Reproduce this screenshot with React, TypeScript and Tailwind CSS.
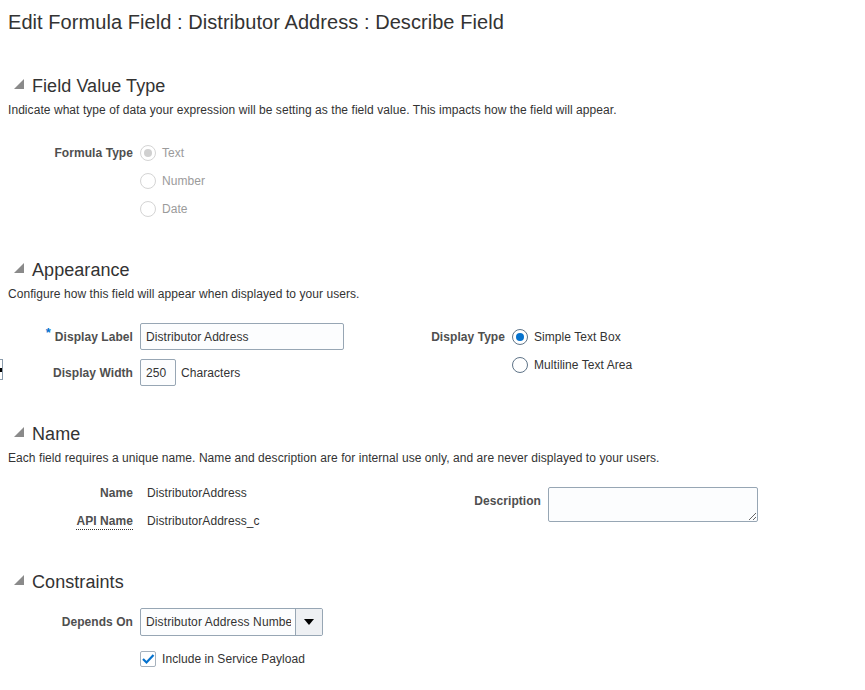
import { FC, ReactNode } from "react";

const SectionHeading: FC<{ title: string }> = ({ title }) => (
  <h2 className="flex items-center gap-2 pl-[6px] text-[18px] leading-6 text-[#333]">
    <svg className="mb-1" height="10" viewBox="0 0 10 10" width="10">
      <polygon fill="#8a8a8a" points="10,0 10,10 0,10" />
    </svg>
    {title}
  </h2>
);

const Label: FC<{ children: ReactNode; className?: string }> = ({ children, className = "w-[125px]" }) => (
  <div className={`flex h-7 shrink-0 items-center justify-end text-xs font-bold text-[#4f4f4f] ${className}`}>
    {children}
  </div>
);

const Radio: FC<{ checked?: boolean; disabled?: boolean }> = ({ checked, disabled }) => (
  <span
    className={`flex h-4 w-4 shrink-0 items-center justify-center rounded-full border bg-white ${
      disabled ? "border-[#d4d4d4]" : "border-[#5f7488]"
    }`}
  >
    {checked && <span className={`h-2 w-2 rounded-full ${disabled ? "bg-[#d0d0d0]" : "bg-[#0572ce]"}`} />}
  </span>
);

const RadioRow: FC<{ label: string; checked?: boolean; disabled?: boolean }> = ({ label, checked, disabled }) => (
  <div className="flex h-7 items-center gap-[6px]">
    <Radio checked={checked} disabled={disabled} />
    <span className={`text-xs ${disabled ? "text-[#9b9b9b]" : "text-[#333]"}`}>{label}</span>
  </div>
);

const inputClass =
  "h-[27px] rounded-[2px] border border-[#97a6b4] bg-[#fcfdfe] px-[5px] text-xs tracking-[0.06px] text-[#333] outline-none";

const App: FC = () => (
  <div className="min-h-screen bg-white px-2 pt-[10px] font-['Liberation_Sans',Arial,sans-serif] tracking-[0.06px] text-[#333]">
    <h1 className="text-[20px] leading-6 text-[#333]">Edit Formula Field : Distributor Address : Describe Field</h1>

    {/* Field Value Type */}
    <section className="mt-[40px]">
      <SectionHeading title="Field Value Type" />
      <p className="mt-1 text-xs leading-4">
        Indicate what type of data your expression will be setting as the field value. This impacts how the field will
        appear.
      </p>
      <div className="mt-[21px] flex gap-[7px]">
        <Label>Formula Type</Label>
        <div className="flex flex-col">
          <RadioRow checked disabled label="Text" />
          <RadioRow disabled label="Number" />
          <RadioRow disabled label="Date" />
        </div>
      </div>
    </section>

    {/* Appearance */}
    <section className="mt-[35px]">
      <SectionHeading title="Appearance" />
      <p className="mt-1 text-xs leading-4">Configure how this field will appear when displayed to your users.</p>
      <div className="mt-[21px] flex">
        <div className="flex w-[412px] flex-col gap-[9px]">
          <div className="flex h-[27px] items-center gap-[7px]">
            <Label className="h-[27px] w-[125px] pt-[1px]">
              <span className="mr-1 -mt-2 text-[13px] text-[#0572ce]">*</span>
              Display Label
            </Label>
            <input className={`${inputClass} w-[204px]`} readOnly value="Distributor Address" />
          </div>
          <div className="relative flex h-[27px] items-center gap-[7px]">
            {/* cut-off element at the left edge */}
            <div className="absolute top-0 left-[-25px] flex h-[21px] w-[20px] items-center justify-end border border-[#8a9bab]">
              <span className="h-[4px] w-[2px] bg-black" />
            </div>
            <Label className="h-[27px] w-[125px] pt-[1px]">Display Width</Label>
            <input className={`${inputClass} w-[36px]`} readOnly value="250" />
            <span className="ml-[-2px] pt-[1px] text-xs">Characters</span>
          </div>
        </div>
        <div className="flex gap-[7px]">
          <Label className="w-[85px]">Display Type</Label>
          <div className="flex flex-col">
            <RadioRow checked label="Simple Text Box" />
            <RadioRow label="Multiline Text Area" />
          </div>
        </div>
      </div>
    </section>

    {/* Name */}
    <section className="mt-[36px]">
      <SectionHeading title="Name" />
      <p className="mt-1 text-xs leading-4">
        Each field requires a unique name. Name and description are for internal use only, and are never displayed to
        your users.
      </p>
      <div className="mt-[13px] flex items-start">
        <div className="flex w-[412px] flex-col">
          <div className="flex gap-[7px]">
            <Label>Name</Label>
            <span className="flex h-7 items-center pl-[7px] text-xs">DistributorAddress</span>
          </div>
          <div className="flex gap-[7px]">
            <Label>
              <span className="border-b border-dotted border-[#333] leading-4">API Name</span>
            </Label>
            <span className="flex h-7 items-center pl-[7px] text-xs">DistributorAddress_c</span>
          </div>
        </div>
        <div className="mt-2 flex items-start gap-[7px]">
          <div className="w-[121px] shrink-0 pt-[6px] text-right text-xs leading-4 font-bold text-[#4f4f4f]">
            Description
          </div>
          <textarea className="h-[35px] w-[210px] rounded-[2px] border border-[#97a6b4] bg-[#fcfdfe] text-xs outline-none" />
        </div>
      </div>
    </section>

    {/* Constraints */}
    <section className="mt-[35px]">
      <SectionHeading title="Constraints" />
      <div className="mt-[14px] flex gap-[7px]">
        <Label>Depends On</Label>
        <div className="flex h-7 w-[183px] overflow-hidden rounded-[2px] border border-[#97a6b4] bg-[#fcfdfe]">
          <span className="flex flex-1 items-center pl-[5px]">
            <span className="w-[145px] overflow-hidden text-xs tracking-[0.12px] whitespace-nowrap">
              Distributor Address Number
            </span>
          </span>
          <span className="flex w-[27px] shrink-0 items-center justify-center border-l border-[#97a6b4] bg-[#eef0f3]">
            <svg height="6" viewBox="0 0 10 6" width="10">
              <polygon fill="#000" points="0,0 10,0 5,6" />
            </svg>
          </span>
        </div>
      </div>
      <div className="mt-[9px] flex h-7 items-center gap-[6px] pl-[132px]">
        <span className="flex h-4 w-4 items-center justify-center rounded-[2px] border border-[#a5b1bd] bg-white">
          <svg height="12" viewBox="0 0 14 12" width="14">
            <polyline fill="none" points="2,6 5.5,9.5 12.5,2" stroke="#0572ce" strokeWidth="2.2" />
          </svg>
        </span>
        <span className="text-xs">Include in Service Payload</span>
      </div>
    </section>
  </div>
);

export default App;
